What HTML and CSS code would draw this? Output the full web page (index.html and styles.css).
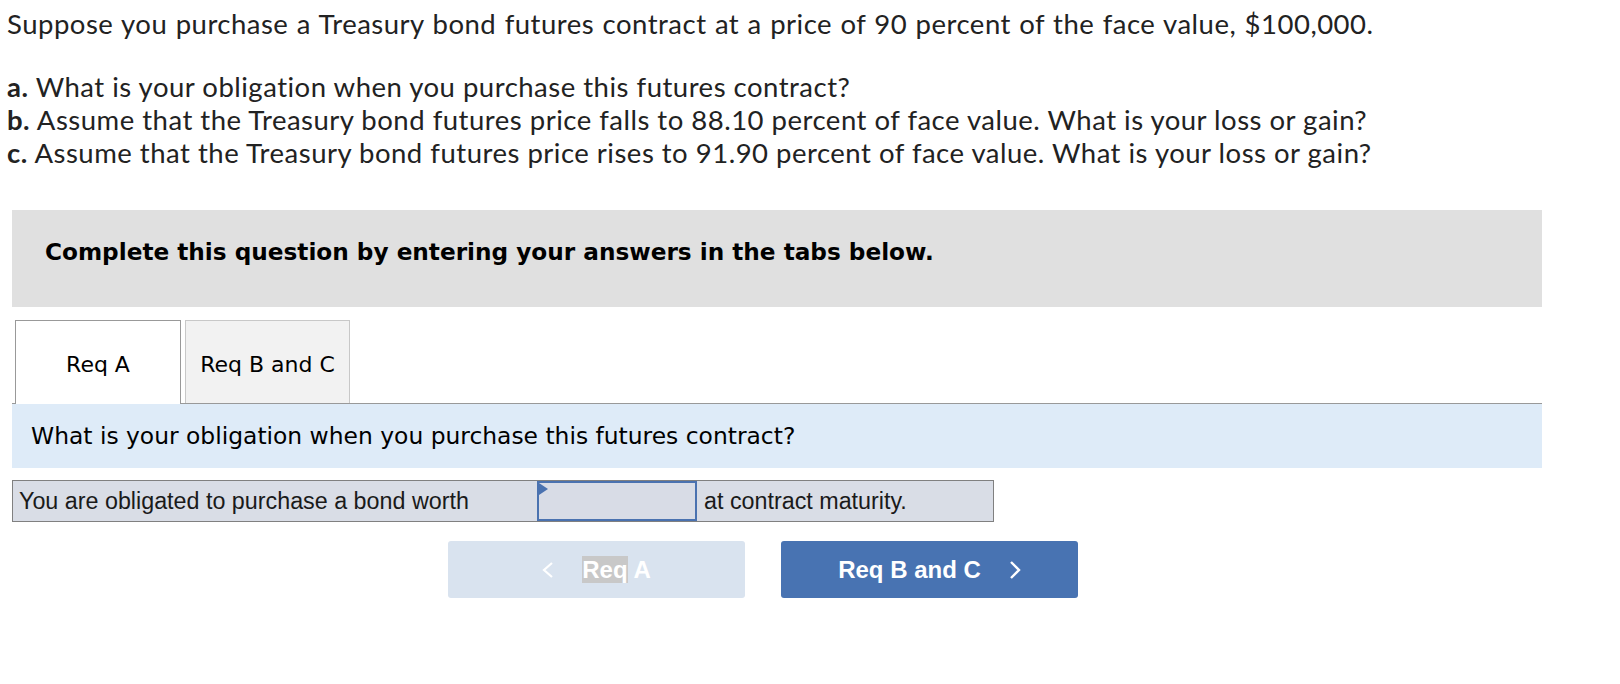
FILE: index.html
```html
<!DOCTYPE html>
<html lang="en">
<head>
<meta charset="utf-8">
<title>Treasury bond futures</title>
<link rel="stylesheet" href="styles.css">
</head>
<body>
<div class="page">
  <div class="intro">
    <p class="lead">Suppose you purchase a Treasury bond futures contract at a price of 90 percent of the face value, $100,000.</p>
    <p class="parts"><b>a.</b> What is your obligation when you purchase this futures contract?<br><b>b.</b> Assume that the Treasury bond futures price falls to 88.10 percent of face value. What is your loss or gain?<br><b>c.</b> Assume that the Treasury bond futures price rises to 91.90 percent of face value. What is your loss or gain?</p>
  </div>

  <div class="instructions">Complete this question by entering your answers in the tabs below.</div>

  <div class="tabs">
    <div class="tab active">Req A</div>
    <div class="tab">Req B and C</div>
  </div>

  <div class="prompt">What is your obligation when you purchase this futures contract?</div>

  <div class="answer-row">
    <div class="cell first">You are obligated to purchase a bond worth</div>
    <div class="cell input"><span class="flag"></span></div>
    <div class="cell last">at contract maturity.</div>
  </div>

  <div class="nav">
    <button class="btn prev" type="button">
      <svg class="chev" width="12" height="16" viewBox="0 0 12 16"><polyline points="10,1 2,8 10,15" fill="none" stroke="#ffffff" stroke-width="2.2"/></svg>
      <span class="btn-label"><span class="hl">Req</span> A</span>
    </button>
    <button class="btn next" type="button">
      <span class="btn-label">Req B and C</span>
      <svg class="chev" width="12" height="18" viewBox="0 0 12 18"><polyline points="2,1 10,9 2,17" fill="none" stroke="#ffffff" stroke-width="2.4"/></svg>
    </button>
  </div>
</div>
</body>
</html>
```

FILE: styles.css
```css
html, body {
  margin: 0;
  padding: 0;
  background: #ffffff;
}

.page {
  width: 1620px;
}

.intro {
  margin-left: 7px;
  padding-top: 7px;
  font-family: Lato, "Open Sans", sans-serif;
  font-size: 27.5px;
  line-height: 33px;
  letter-spacing: 0.5px;
  color: #222222;
}

.intro p {
  margin: 0;
}

.intro .lead {
  word-spacing: 0.85px;
}

.intro .parts {
  margin-top: 29.5px;
}

.intro b {
  font-weight: 700;
}

.instructions {
  box-sizing: border-box;
  margin: 41.5px 0 0 12px;
  width: 1530px;
  height: 97px;
  padding: 27px 0 0 33px;
  line-height: 30px;
  background: #e0e0e0;
  font-family: "DejaVu Sans", Verdana, sans-serif;
  font-weight: 700;
  font-size: 23.2px;
  color: #000000;
}

.tabs {
  display: flex;
  align-items: flex-start;
  gap: 4px;
  margin: 13px 0 0 12px;
  width: 1527px;
  padding-left: 3px;
  height: 83px;
  border-bottom: 1px solid #999999;
}

.tab {
  box-sizing: border-box;
  height: 83px;
  width: 165px;
  padding-top: 4px;
  display: flex;
  align-items: center;
  justify-content: center;
  background: #f2f2f2;
  border: 1px solid #c8c8c8;
  border-bottom: none;
  font-family: "DejaVu Sans", Verdana, sans-serif;
  font-size: 22px;
  color: #000000;
}

.tab.active {
  width: 166px;
  height: 84px;
  background: #ffffff;
  border-color: #999999;
  position: relative;
  z-index: 1;
}

.prompt {
  box-sizing: border-box;
  margin-left: 12px;
  width: 1530px;
  height: 64px;
  padding: 19px 0 0 19px;
  line-height: 26px;
  background: #deebf8;
  font-family: "DejaVu Sans", Verdana, sans-serif;
  font-size: 23.4px;
  color: #000000;
}

.answer-row {
  display: flex;
  margin: 12px 0 0 12px;
  width: 982px;
  height: 42px;
  box-sizing: border-box;
  border: 1px solid #808080;
  background: #d9dde6;
  font-family: "Liberation Sans", Arial, sans-serif;
  font-size: 23.3px;
  color: #1a1a1a;
}

.cell {
  display: flex;
  align-items: center;
  box-sizing: border-box;
  height: 40px;
  white-space: nowrap;
}

.cell.first {
  width: 524px;
  padding-left: 6px;
}

.cell.input {
  width: 160px;
  border: 2px solid #4a72b0;
  position: relative;
  background: #d8dce6;
}

.cell.last {
  flex: 1;
  padding-left: 7px;
}

.flag {
  position: absolute;
  left: 0;
  top: 0;
  width: 0;
  height: 0;
  border-top: 6px solid transparent;
  border-bottom: 6px solid transparent;
  border-left: 9px solid #4a72b0;
}

.nav {
  display: flex;
  gap: 36px;
  margin: 19px 0 0 448px;
}

.btn {
  box-sizing: border-box;
  width: 297px;
  height: 57px;
  border: none;
  border-radius: 3px;
  display: flex;
  align-items: center;
  justify-content: center;
  gap: 28px;
  padding: 0;
  font-family: "Liberation Sans", Arial, sans-serif;
  font-weight: 700;
  font-size: 24px;
  color: #ffffff;
}

.btn.prev {
  background: #d9e3ef;
}

.btn.next {
  background: #4873b2;
}

.btn-label {
  line-height: 28px;
}

.hl {
  background: #c8c8c8;
}

.chev {
  display: block;
}
```
